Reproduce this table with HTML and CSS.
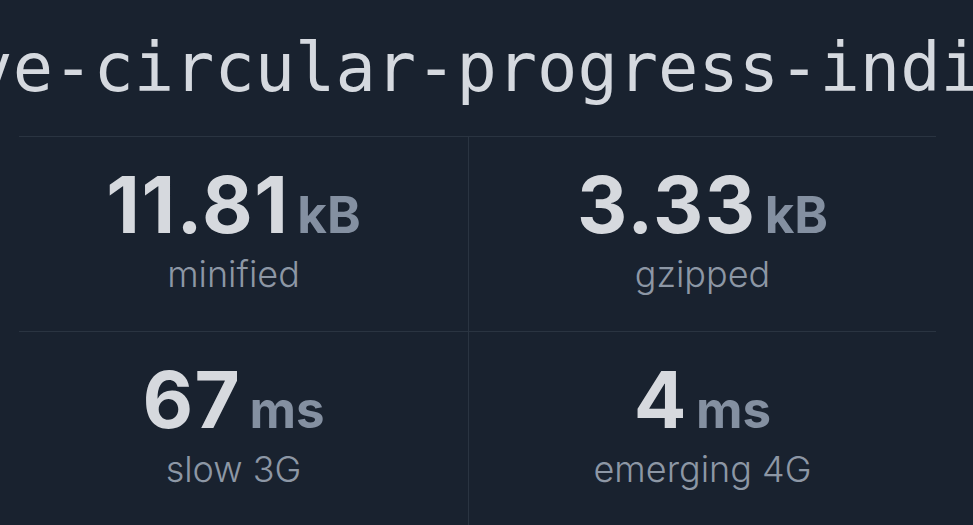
FILE: index.html
```html
<!DOCTYPE html>
<html lang="en">
<head>
<meta charset="utf-8">
<title>react-native-circular-progress-indicator</title>
<link rel="stylesheet" href="styles.css">
</head>
<body>
<main class="page">
  <h1 class="pkg-name">react-native-circular-progress-indicator</h1>
  <section class="stats">
    <div class="stat">
      <div class="stat-value"><span class="num">11.81</span><span class="unit">kB</span></div>
      <div class="stat-label">minified</div>
    </div>
    <div class="stat stat-right">
      <div class="stat-value"><span class="num">3.33</span><span class="unit">kB</span></div>
      <div class="stat-label">gzipped</div>
    </div>
    <div class="stat">
      <div class="stat-value"><span class="num">67</span><span class="unit">ms</span></div>
      <div class="stat-label">slow 3G</div>
    </div>
    <div class="stat stat-right">
      <div class="stat-value"><span class="num">4</span><span class="unit">ms</span></div>
      <div class="stat-label">emerging 4G</div>
    </div>
  </section>
</main>
</body>
</html>
```

FILE: styles.css
```css
html, body {
  margin: 0;
  padding: 0;
  background: #19222f;
  height: 100%;
  overflow: hidden;
}

.page {
  width: 973px;
  overflow: hidden;
}

.pkg-name {
  margin: 0 0 34px -431px;
  padding-top: 35px;
  font-family: "DejaVu Sans Mono", "Liberation Mono", monospace;
  font-weight: 400;
  font-size: 67px;
  line-height: 67px;
  color: #d5d9df;
  white-space: nowrap;
}

.stats {
  margin-left: 19px;
  width: 917px;
  display: grid;
  grid-template-columns: 449px 468px;
}

.stat {
  border-top: 1px solid #2a3441;
  box-sizing: border-box;
  height: 195px;
  padding-top: 29px;
  padding-right: 20px;
  display: flex;
  flex-direction: column;
  align-items: center;
  font-family: Inter, "Liberation Sans", sans-serif;
}

.stat-right {
  border-left: 1px solid #2a3441;
  padding-right: 0;
}

.stat-value {
  display: flex;
  align-items: baseline;
  gap: 8px;
  height: 78px;
  line-height: 78px;
}

.num {
  font-size: 78px;
  font-weight: 700;
  color: #d6d9de;
  letter-spacing: 1.5px;
}

.unit {
  font-size: 51px;
  font-weight: 700;
  color: #8490a1;
}

.stat-label {
  margin-top: 12px;
  font-size: 36px;
  line-height: 36px;
  font-weight: 300;
  color: #8d97a5;
}
```
